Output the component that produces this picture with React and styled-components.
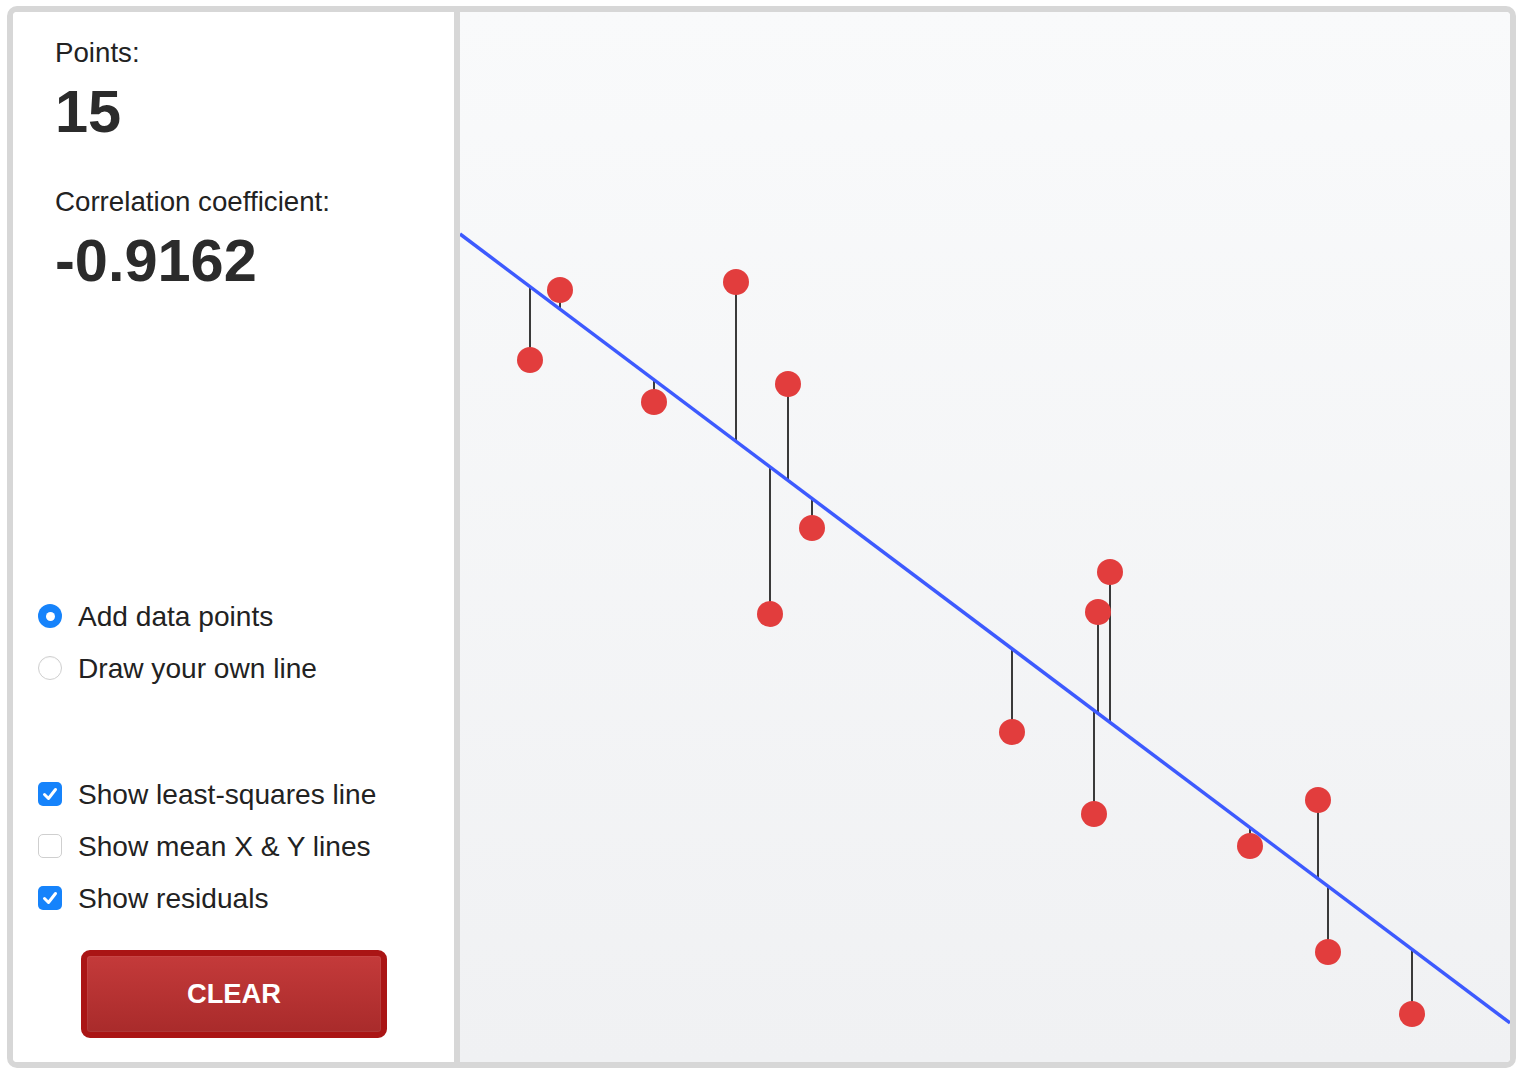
import React from 'react'
import styled, {createGlobalStyle} from 'styled-components'

const points = [
  [530, 360], [560, 290], [654, 402], [736, 282], [788, 384],
  [770, 614], [812, 528], [1012, 732], [1110, 572], [1098, 612],
  [1094, 814], [1250, 846], [1318, 800], [1328, 952], [1412, 1014],
].map(([x, y]) => [x - 460, y - 12])

// least-squares line as it sits in the chart (chart-local coords)
const lineY = x => 222 + x * 0.7514

function App() {
  return (
    <>
      <GlobalStyle />
      <Frame>
        <Side>
          <Stats>
            <Label>Points:</Label>
            <Value>15</Value>
            <Label $spaced>Correlation coefficient:</Label>
            <Value>-0.9162</Value>
          </Stats>

          <Controls>
            <Group>
              <Option>
                <Radio $checked />
                <span>Add data points</span>
              </Option>
              <Option>
                <Radio />
                <span>Draw your own line</span>
              </Option>
            </Group>
            <Group>
              <Option>
                <Check $checked><CheckMark /></Check>
                <span>Show least-squares line</span>
              </Option>
              <Option>
                <Check />
                <span>Show mean X &amp; Y lines</span>
              </Option>
              <Option>
                <Check $checked><CheckMark /></Check>
                <span>Show residuals</span>
              </Option>
            </Group>
            <ClearButton>CLEAR</ClearButton>
          </Controls>
        </Side>

        <Chart>
          <svg width="1050" height="1050" viewBox="0 0 1050 1050">
            {points.map(([x, y], i) => (
              <line key={'r' + i} x1={x} y1={y} x2={x} y2={lineY(x)} stroke="#3a3a3a" strokeWidth="2" />
            ))}
            <line x1="0" y1={lineY(0)} x2="1050" y2={lineY(1050)} stroke="#3d5afe" strokeWidth="3.5" />
            {points.map(([x, y], i) => (
              <circle key={'p' + i} cx={x} cy={y} r="13" fill="#e23d3d" />
            ))}
          </svg>
        </Chart>
      </Frame>
    </>
  )
}

function CheckMark() {
  return (
    <svg width="24" height="24" viewBox="0 0 24 24">
      <path d="M6.5 12.5 L10.5 16.5 L17.5 7.5" fill="none" stroke="#fff" strokeWidth="3" strokeLinecap="round" strokeLinejoin="round" />
    </svg>
  )
}

const GlobalStyle = createGlobalStyle`
  body {
    margin: 0;
    background: #fff;
    font-family: "Liberation Sans", Arial, sans-serif;
    color: #222;
  }
`

const Frame = styled.div`
  display: flex;
  width: 1509px;
  height: 1062px;
  margin: 6px 0 0 7px;
  box-sizing: border-box;
  border: 6px solid #d7d7d7;
  border-radius: 10px;
  overflow: hidden;
`

const Side = styled.div`
  width: 441px;
  flex-shrink: 0;
  display: flex;
  flex-direction: column;
  border-right: 6px solid #d7d7d7;
  padding: 25px 0 24px;
  background: #fff;
`

const Stats = styled.div`
  padding-left: 42px;
`

const Label = styled.div`
  font-size: 27.7px;
  line-height: 32px;
  color: #222;
  margin-top: ${p => (p.$spaced ? '44px' : '0')};
`

const Value = styled.div`
  font-size: 59.5px;
  line-height: 60px;
  font-weight: 700;
  color: #2b2b2b;
  margin-top: 13px;
`

const Controls = styled.div`
  margin-top: auto;
  display: flex;
  flex-direction: column;
`

const Group = styled.div`
  display: flex;
  flex-direction: column;
  padding-left: 25px;
  & + & {
    margin-top: 74px;
  }
`

const Option = styled.div`
  display: flex;
  align-items: center;
  gap: 16px;
  height: 52px;
  padding-top: 2px;
  box-sizing: border-box;
  font-size: 28.1px;
  color: #222;
`

const Radio = styled.span`
  width: 24px;
  height: 24px;
  margin-top: -2px;
  border-radius: 50%;
  box-sizing: border-box;
  flex-shrink: 0;
  background: ${p => (p.$checked ? '#1683fb' : '#fff')};
  border: ${p => (p.$checked ? 'none' : '1px solid #cfcfcf')};
  box-shadow: ${p => (p.$checked ? 'none' : 'inset 0 1px 1px rgba(0,0,0,0.04)')};
  display: flex;
  align-items: center;
  justify-content: center;

  &::after {
    content: '';
    display: ${p => (p.$checked ? 'block' : 'none')};
    width: 9px;
    height: 9px;
    border-radius: 50%;
    background: #fff;
  }
`

const Check = styled.span`
  width: 24px;
  height: 24px;
  margin-top: -2px;
  border-radius: 5px;
  box-sizing: border-box;
  flex-shrink: 0;
  background: ${p => (p.$checked ? '#1683fb' : '#fff')};
  border: ${p => (p.$checked ? 'none' : '1px solid #cfcfcf')};
  display: flex;

  svg {
    display: block;
  }
`

const ClearButton = styled.button`
  align-self: center;
  margin: 26px 0 0 1px;
  width: 306px;
  height: 88px;
  box-sizing: border-box;
  border: 6px solid #aa1515;
  border-radius: 9px;
  background: linear-gradient(#c43a3a, #a92b2b);
  box-shadow: inset 0 0 0 1px rgba(255, 255, 255, 0.06);
  color: #fff;
  font-family: "Liberation Sans", Arial, sans-serif;
  font-size: 27.3px;
  font-weight: 700;
  cursor: pointer;
`

const Chart = styled.div`
  width: 1050px;
  height: 1050px;
  flex-shrink: 0;
  background: linear-gradient(#f9fafb, #f0f1f3);

  svg {
    display: block;
  }
`

export default App
